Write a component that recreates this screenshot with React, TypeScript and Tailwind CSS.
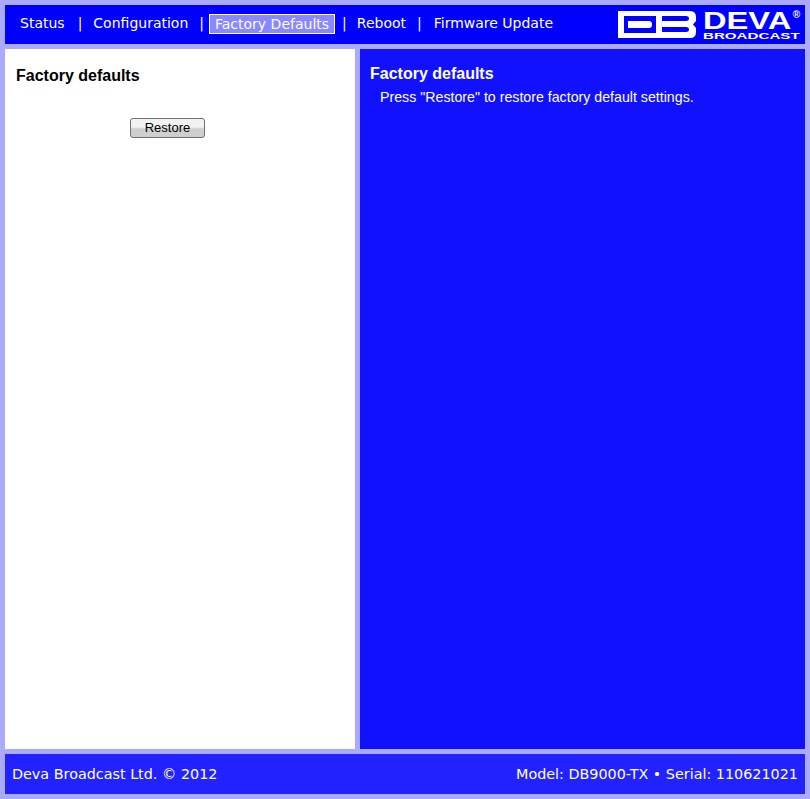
function DbLogo() {
  return (
    <svg width="78" height="27" viewBox="0 0 78 27" className="block shrink-0">
      <path
        fillRule="evenodd"
        fill="#ffffff"
        d="M0 0H72Q78 0 78 6V10L75 13.5L78 17V21Q78 27 72 27H0Z M6 5V22H38V5Z M44 5V10H68Q71 10 71 7.5Q71 5 68 5Z M44 16V21H68Q71 21 71 18.5Q71 16 68 16Z"
      />
      <path fill="#ffffff" d="M10 10H31Q34 10 34 13.5Q34 17 31 17H10Z" />
    </svg>
  );
}

function Logo() {
  return (
    <div className="flex items-center gap-[7px]">
      <DbLogo />
      <div className="flex h-[27px] w-[97px] flex-col font-['Liberation_Sans',Arial,sans-serif] font-bold whitespace-nowrap text-white">
        <div className="relative h-[20px]">
          <span className="block origin-left pt-[1px] text-[23px] leading-[19px] [transform:scaleX(1.42)]">DEVA</span>
          <span className="absolute top-[-1px] right-0 text-[10px] leading-[10px]">®</span>
        </div>
        <span className="mt-[2px] block origin-left text-[8.5px] leading-[6px] [transform:scaleX(1.78)]">BROADCAST</span>
      </div>
    </div>
  );
}

export default function App() {
  return (
    <div className="flex h-[799px] w-[810px] flex-col gap-[5px] overflow-hidden bg-[#aaaaff] p-[5px] font-['DejaVu_Sans',Verdana,sans-serif]">
      {/* top menu */}
      <div className="flex h-[39px] shrink-0 items-center justify-between bg-[#0000ff] pr-[5px] text-[14px] text-white">
        <div className="flex items-center pb-[2px] pl-[15px]">
          <a>Status</a>
          <span className="ml-[13px] mr-[11px]">|</span>
          <a>Configuration</a>
          <span className="ml-[11px] mr-[5px]">|</span>
          <a className="border border-white bg-[#8888ff] px-[5px] leading-[18px]">Factory Defaults</a>
          <span className="ml-[7px] mr-[10px]">|</span>
          <a>Reboot</a>
          <span className="ml-[11px] mr-[12px]">|</span>
          <a>Firmware Update</a>
        </div>
        <Logo />
      </div>

      {/* content */}
      <div className="flex h-[700px] shrink-0 gap-[5px] font-['Liberation_Sans',Arial,sans-serif]">
        <div className="w-[350px] shrink-0 bg-white px-[11px] pt-[18px] text-black">
          <h2 className="text-[16px] leading-[18px] font-bold">Factory defaults</h2>
          <div className="mt-[33px] flex justify-center pr-[25px]">
            <button className="h-[20px] w-[75px] rounded-[3px] border border-[#707070] bg-gradient-to-b from-[#f2f2f2] from-45% to-[#cfcfcf] to-55% text-[13px] leading-[18px] text-black">
              Restore
            </button>
          </div>
        </div>
        <div className="flex-1 bg-[#1111ff] px-[10px] pt-[16px] text-white">
          <h2 className="text-[16px] leading-[18px] font-bold">Factory defaults</h2>
          <p className="mt-[5px] pl-[10px] text-[14.2px] leading-[18px]">
            Press "Restore" to restore factory default settings.
          </p>
        </div>
      </div>

      {/* footer */}
      <div className="flex h-[40px] shrink-0 items-center justify-between bg-[#2222ff] px-[7px] pt-[1px] text-[14.35px] text-white">
        <span>Deva Broadcast Ltd. © 2012</span>
        <span>Model: DB9000-TX • Serial: 110621021</span>
      </div>
    </div>
  );
}
